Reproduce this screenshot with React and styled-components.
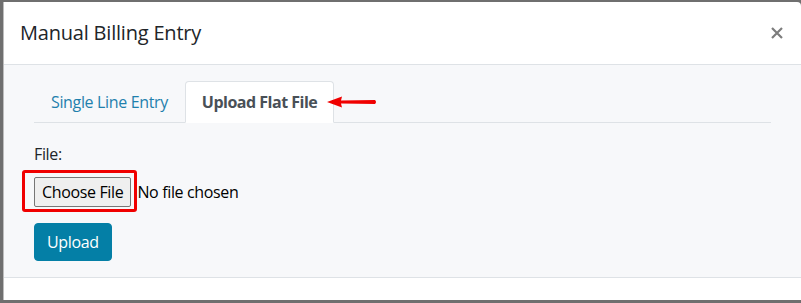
import styled, { createGlobalStyle } from "styled-components";

const GlobalStyle = createGlobalStyle`
  html, body {
    margin: 0;
    background: #6f6f6f;
    overflow: hidden;
  }
  body {
    font-family: "Open Sans", "Noto Sans", sans-serif;
    color: #212529;
    letter-spacing: -0.35px;
  }
`;

const Page = styled.div`
  height: 303px;
  padding: 2px 0 0 3px;
  box-sizing: border-box;
`;

const Modal = styled.div`
  background: #fff;
  border-left: 1px solid #bdbdbd;
  border-top-right-radius: 4px;
`;

const Header = styled.div`
  display: flex;
  align-items: center;
  justify-content: space-between;
  padding: 16px 18px 16px 16px;
  border-bottom: 1px solid #dee2e6;
`;

const Title = styled.h5`
  margin: 0;
  font-size: 20px;
  line-height: 30px;
  font-weight: 500;
  letter-spacing: -0.2px;
  color: #212529;
`;

const CloseButton = styled.button`
  display: flex;
  padding: 0;
  border: 0;
  background: none;
  cursor: pointer;
`;

const Body = styled.div`
  background: #f7f8fa;
  padding: 16px 30px;
  border-bottom: 1px solid #dee2e6;
`;

const Tabs = styled.div`
  position: relative;
  display: flex;
  border-bottom: 1px solid #dee2e6;
`;

const Tab = styled.a`
  display: block;
  padding: 8px 16px;
  margin-bottom: -1px;
  font-size: 16px;
  line-height: 24px;
  letter-spacing: ${(p) => (p.$active ? "-0.5px" : "-0.35px")};
  border: 1px solid ${(p) => (p.$active ? "#dee2e6" : "transparent")};
  border-bottom-color: ${(p) => (p.$active ? "#fff" : "transparent")};
  border-radius: 4px 4px 0 0;
  background: ${(p) => (p.$active ? "#fff" : "transparent")};
  color: ${(p) => (p.$active ? "#495057" : "#1f80ad")};
  font-weight: ${(p) => (p.$active ? 700 : 400)};
  text-decoration: none;
  cursor: pointer;
`;

const Arrow = styled.svg`
  position: absolute;
  left: 293px;
  top: 14px;
`;

const FormGroup = styled.div`
  padding-top: 19px;
`;

const Label = styled.label`
  display: block;
  font-size: 16px;
  line-height: 24px;
  margin-bottom: 11px;
`;

const FileRow = styled.div`
  display: flex;
  align-items: center;
  gap: 6px;
  font-size: 16px;
`;

const Highlight = styled.span`
  position: relative;
  display: inline-flex;

  &::after {
    content: "";
    position: absolute;
    left: -12px;
    right: -6px;
    top: -7px;
    bottom: -5px;
    border: 3px solid #f00000;
    border-radius: 3px;
    pointer-events: none;
  }
`;

const ChooseButton = styled.span`
  display: inline-block;
  height: 30px;
  box-sizing: border-box;
  padding: 0 7px;
  line-height: 28px;
  font-size: 16px;
  color: #000;
  background: #efefef;
  border: 1px solid #767676;
  border-radius: 2px;
`;

const FileName = styled.span`
  color: #000;
`;

const UploadButton = styled.button`
  margin-top: 16px;
  height: 38px;
  padding: 6px 12px;
  font-family: inherit;
  font-size: 16px;
  line-height: 24px;
  letter-spacing: inherit;
  color: #fff;
  background: #047fa6;
  border: 1px solid #047fa6;
  border-radius: 4px;
  cursor: pointer;
`;

const Footer = styled.div`
  height: 22px;
`;

export default function App() {
  return (
    <>
      <GlobalStyle />
      <Page>
        <Modal>
          <Header>
            <Title>Manual Billing Entry</Title>
            <CloseButton aria-label="Close">
              <svg width="12" height="12" viewBox="0 0 12 12">
                <path
                  d="M1 1 L11 11 M11 1 L1 11"
                  stroke="#7d7d7d"
                  strokeWidth="2.2"
                />
              </svg>
            </CloseButton>
          </Header>
          <Body>
            <Tabs>
              <Tab>Single Line Entry</Tab>
              <Tab $active>Upload Flat File</Tab>
              <Arrow width="50" height="14" viewBox="0 0 50 14">
                <path
                  d="M0 7 L15 1.5 L14 5.5 L48 5 Q50 7 48 9 L14 8.5 L15 12.5 Z"
                  fill="#f00000"
                />
              </Arrow>
            </Tabs>
            <FormGroup>
              <Label>File:</Label>
              <FileRow>
                <Highlight>
                  <ChooseButton>Choose File</ChooseButton>
                </Highlight>
                <FileName>No file chosen</FileName>
              </FileRow>
              <UploadButton>Upload</UploadButton>
            </FormGroup>
          </Body>
          <Footer />
        </Modal>
      </Page>
    </>
  );
}
